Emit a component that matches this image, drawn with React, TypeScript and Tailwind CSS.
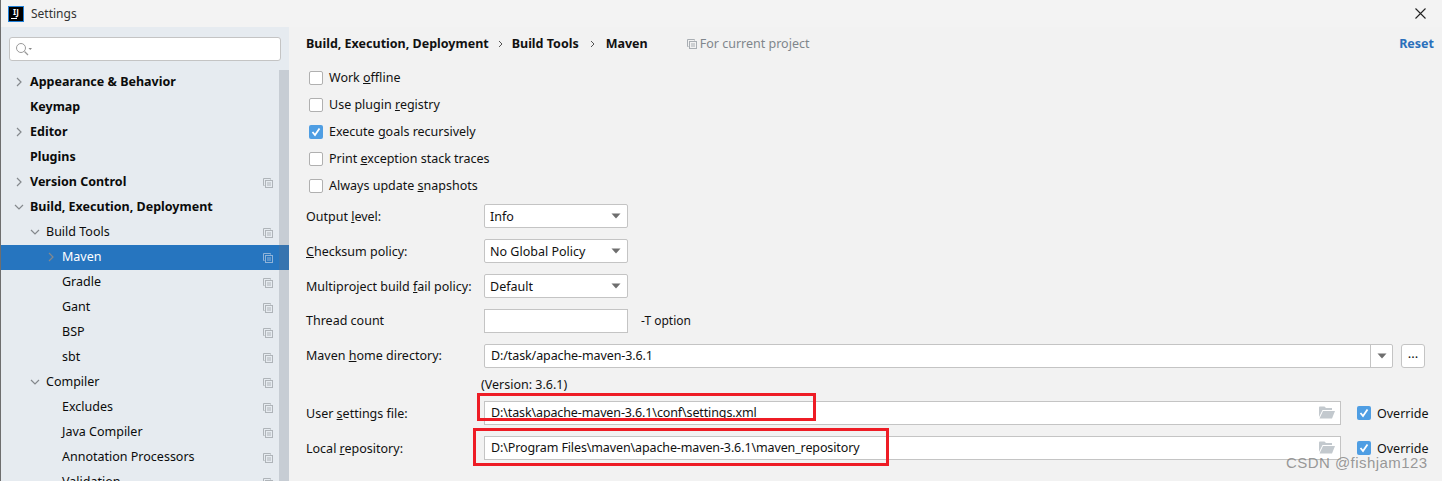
import React from "react";

const font = { fontFamily: '"Noto Sans", "Open Sans", sans-serif' };

function CopyIcon({ className = "text-[#afb4b9]" }: { className?: string }) {
  return (
    <svg width="10" height="10" viewBox="0 0 10 10" fill="none" stroke="currentColor" strokeWidth="1" className={className}>
      <path d="M7.5 1.5V0.5H0.5V7.5H1.5" />
      <rect x="2.5" y="2.5" width="7" height="7" />
      <path d="M4 5H8M4 7H8" />
    </svg>
  );
}

function Chevron({ open, className = "text-[#85898d]" }: { open: boolean; className?: string }) {
  return (
    <svg width="10" height="10" viewBox="0 0 10 10" fill="none" stroke="currentColor" strokeWidth="1.2" className={className}>
      {open ? <path d="M1 3L5 7L9 3" /> : <path d="M3 1L7 5L3 9" />}
    </svg>
  );
}

type Row = { label: string; bold?: boolean; level: 0 | 1 | 2; arrow?: "open" | "closed"; copy?: boolean; selected?: boolean };

const rows: Row[] = [
  { label: "Appearance & Behavior", bold: true, level: 0, arrow: "closed" },
  { label: "Keymap", bold: true, level: 0 },
  { label: "Editor", bold: true, level: 0, arrow: "closed" },
  { label: "Plugins", bold: true, level: 0 },
  { label: "Version Control", bold: true, level: 0, arrow: "closed", copy: true },
  { label: "Build, Execution, Deployment", bold: true, level: 0, arrow: "open" },
  { label: "Build Tools", level: 1, arrow: "open", copy: true },
  { label: "Maven", level: 2, arrow: "closed", copy: true, selected: true },
  { label: "Gradle", level: 2, copy: true },
  { label: "Gant", level: 2, copy: true },
  { label: "BSP", level: 2, copy: true },
  { label: "sbt", level: 2, copy: true },
  { label: "Compiler", level: 1, arrow: "open", copy: true },
  { label: "Excludes", level: 2, copy: true },
  { label: "Java Compiler", level: 2, copy: true },
  { label: "Annotation Processors", level: 2, copy: true },
  { label: "Validation", level: 2, copy: true },
];

const textPad = { 0: "pl-[29px]", 1: "pl-[45px]", 2: "pl-[61px]" } as const;
const arrowLeft = { 0: "left-[13px]", 1: "left-[29px]", 2: "left-[45px]" } as const;

function TreeRow({ r }: { r: Row }) {
  return (
    <div
      className={`relative flex h-[25px] shrink-0 items-center justify-between pr-[16px] text-[12.5px] ${textPad[r.level]} ${
        r.selected ? "bg-[#2675bf] text-white" : "text-[#0b0b0b]"
      } ${r.bold ? "font-bold" : ""}`}
    >
      {r.arrow && (
        <span className={`absolute top-[7px] ${arrowLeft[r.level]}`}>
          <Chevron open={r.arrow === "open"} />
        </span>
      )}
      <span className="whitespace-nowrap">{r.label}</span>
      {r.copy && <CopyIcon className={r.selected ? "text-[#8fb3d8]" : "text-[#afb4b9]"} />}
    </div>
  );
}

function Sidebar() {
  return (
    <div className="relative flex w-[288px] shrink-0 flex-col overflow-hidden bg-[#e6ebf0]">
      <div className="px-2 pt-[10px] pr-[8px]">
        <div className="flex h-[24px] items-center rounded-[3px] border border-[#c4c4c4] bg-white pl-[5px]">
          <svg width="18" height="14" viewBox="0 0 18 14" fill="none">
            <circle cx="6" cy="6" r="4.5" stroke="#9a9a9a" strokeWidth="1" />
            <path d="M9.5 9.5L13 13" stroke="#9a9a9a" strokeWidth="1.2" />
            <path d="M13.5 6H17L15.25 8Z" fill="#8a8a8a" />
          </svg>
        </div>
      </div>
      <div className="mt-[9px] flex flex-col">
        {rows.map((r) => (
          <TreeRow key={r.label} r={r} />
        ))}
      </div>
      <div className="absolute bottom-0 right-0 top-[43px] w-[10px] bg-[#6a7280]/25" />
    </div>
  );
}

function Check({ checked }: { checked?: boolean }) {
  return checked ? (
    <span className="flex h-[14px] w-[14px] shrink-0 items-center justify-center rounded-[2px] bg-[#4f9ee3]">
      <svg width="10" height="10" viewBox="0 0 10 10" fill="none" stroke="white" strokeWidth="1.8">
        <path d="M1.5 5L4 8L8.5 1.5" />
      </svg>
    </span>
  ) : (
    <span className="h-[14px] w-[14px] shrink-0 rounded-[2px] border border-[#b0b0b0] bg-white" />
  );
}

function CheckRow({ checked, children }: { checked?: boolean; children: React.ReactNode }) {
  return (
    <div className="flex h-[27px] items-center gap-[6px] pl-[3px] text-[12.5px] text-[#111]">
      <Check checked={checked} />
      <span className="pt-[2px]">{children}</span>
    </div>
  );
}

function Label({ children, low = true }: { children: React.ReactNode; low?: boolean }) {
  return <div className={`w-[178px] shrink-0 whitespace-nowrap text-[12.5px] text-[#111] ${low ? "pt-[4px]" : "pt-[2px]"}`}>{children}</div>;
}

function Caret() {
  return (
    <svg width="10" height="6" viewBox="0 0 10 6" className="shrink-0">
      <path d="M0.5 0.5H9.5L5 5.5Z" fill="#6e6e6e" />
    </svg>
  );
}

function Select({ value }: { value: string }) {
  return (
    <div className="flex h-[24px] w-[144px] items-center justify-between rounded-[2px] border border-[#c4c4c4] bg-white pl-[5px] pr-[6px] text-[12.5px] text-[#111]">
      <span className="pt-[4px]">{value}</span>
      <Caret />
    </div>
  );
}

function FolderIcon() {
  return (
    <svg width="16" height="13" viewBox="0 0 16 13" className="shrink-0">
      <path d="M0 1.5C0 1 .5 .5 1 .5H5.5L7 2H13V4H3.5L0 11Z" fill="#c3c9ce" />
      <path d="M4 5H16L13 12.5H0.5Z" fill="#c3c9ce" />
    </svg>
  );
}

function PathRow({ label, value }: { label: React.ReactNode; value: string }) {
  return (
    <div className="flex h-[35px] items-center">
      <Label>{label}</Label>
      <div className="flex h-[24px] w-[857px] items-center justify-between border border-[#c4c4c4] bg-white pl-[6px] pr-[5px] text-[12.5px] tracking-[-0.12px] text-[#111]">
        <span className="whitespace-nowrap pt-[1px]">{value}</span>
        <FolderIcon />
      </div>
      <div className="ml-[16px] flex items-center gap-[6px] text-[12.5px] text-[#111]">
        <Check checked />
        <span className="pt-[4px]">Override</span>
      </div>
    </div>
  );
}

function Sep({ wide }: { wide?: boolean }) {
  return (
    <span className={wide ? "mx-[10px]" : "mx-[8px]"}>
      <svg width="7" height="8" viewBox="0 0 7 8" fill="none" stroke="#555" strokeWidth="1"><path d="M2 1L5 4L2 7" /></svg>
    </span>
  );
}

function Main() {
  return (
    <div className="flex min-w-0 flex-1 flex-col pl-[17px] pr-[8px]">
      <div className="flex h-[33px] shrink-0 items-center pt-[1px] text-[12.5px]">
        <span className="font-bold text-[#111]">Build, Execution, Deployment</span>
        <Sep />
        <span className="font-bold text-[#111]">Build Tools</span>
        <Sep wide />
        <span className="font-bold text-[#111]">Maven</span>
        <span className="ml-[39px] flex items-center gap-[3px] text-[#7f868c]">
          <CopyIcon className="text-[#a9aeb3]" />
          For current project
        </span>
        <span className="ml-auto font-bold text-[#2a70bb]">Reset</span>
      </div>
      <div className="mt-[4px] flex flex-col">
        <CheckRow>Work <u>o</u>ffline</CheckRow>
        <CheckRow>Use plugin <u>r</u>egistry</CheckRow>
        <CheckRow checked>Execute <u>g</u>oals recursively</CheckRow>
        <CheckRow>Print <u>e</u>xception stack traces</CheckRow>
        <CheckRow>Always update <u>s</u>napshots</CheckRow>
      </div>
      <div className="-mt-px flex flex-col">
        <div className="flex h-[35px] items-center"><Label>Output <u>l</u>evel:</Label><Select value="Info" /></div>
        <div className="flex h-[35px] items-center"><Label><u>C</u>hecksum policy:</Label><Select value="No Global Policy" /></div>
        <div className="flex h-[35px] items-center"><Label>Multiproject build <u>f</u>ail policy:</Label><Select value="Default" /></div>
        <div className="flex h-[35px] items-center">
          <Label low={false}>Thread count</Label>
          <div className="h-[24px] w-[144px] border border-[#c4c4c4] bg-white" />
          <span className="ml-[13px] text-[12px] text-[#111]">-T option</span>
        </div>
        <div className="flex h-[35px] items-center">
          <Label low={false}>Maven <u>h</u>ome directory:</Label>
          <div className="flex h-[24px] w-[909px] items-center rounded-[2px] border border-[#c4c4c4] bg-white pl-[6px] text-[12.5px] tracking-[-0.1px] text-[#111]">
            <span className="flex-1 pt-[2px]">D:/task/apache-maven-3.6.1</span>
            <div className="flex h-full w-[22px] items-center justify-center border-l border-[#c4c4c4]"><Caret /></div>
          </div>
          <div className="ml-[8px] flex h-[24px] w-[24px] items-center justify-center rounded-[3px] border border-[#c4c4c4] bg-white pb-[3px] text-[13px] text-[#111]">...</div>
        </div>
      </div>
      <div className="flex h-[22px] items-center pl-[175px] pt-[2px] text-[12.5px] text-[#111]">(Version: 3.6.1)</div>
      <div className="flex flex-col">
        <PathRow label={<>User <u>s</u>ettings file:</>} value="D:\task\apache-maven-3.6.1\conf\settings.xml" />
        <PathRow label={<>Local <u>r</u>epository:</>} value="D:\Program Files\maven\apache-maven-3.6.1\maven_repository" />
      </div>
    </div>
  );
}

export default function App() {
  return (
    <div style={font} className="relative flex h-[481px] w-[1442px] flex-col overflow-hidden border-l border-[#6e6e6e] bg-[#f2f2f2]">
      <div className="flex h-[27px] shrink-0 items-center bg-[#f3f3f3] pl-[7px] pr-[16px]">
        <div className="relative flex h-[16px] w-[16px] items-start justify-center border border-[#1f7fd8] bg-black pt-px text-[8px] font-bold leading-[8px] text-white">
          IJ
          <span className="absolute bottom-[2px] left-[2px] h-px w-[6px] bg-white" />
        </div>
        <span className="ml-[7px] text-[12px] text-[#333]">Settings</span>
        <svg width="11" height="11" viewBox="0 0 11 11" fill="none" stroke="#222" strokeWidth="1.1" className="ml-auto">
          <path d="M0.5 0.5L10.5 10.5M10.5 0.5L0.5 10.5" />
        </svg>
      </div>
      <div className="flex min-h-0 flex-1">
        <Sidebar />
        <Main />
      </div>
      <div className="pointer-events-none absolute left-[476px] top-[393px] h-[28px] w-[339px] border-[3px] border-[#ee1c25]" />
      <div className="pointer-events-none absolute left-[472px] top-[428px] h-[38px] w-[416px] border-[3px] border-[#ee1c25]" />
      <div className="pointer-events-none absolute left-[1285px] top-[454px] text-[15px] leading-[18px] tracking-[0.45px] text-[#808080]/80" style={{ fontFamily: '"Liberation Sans", sans-serif' }}>CSDN @fishjam123</div>
    </div>
  );
}
